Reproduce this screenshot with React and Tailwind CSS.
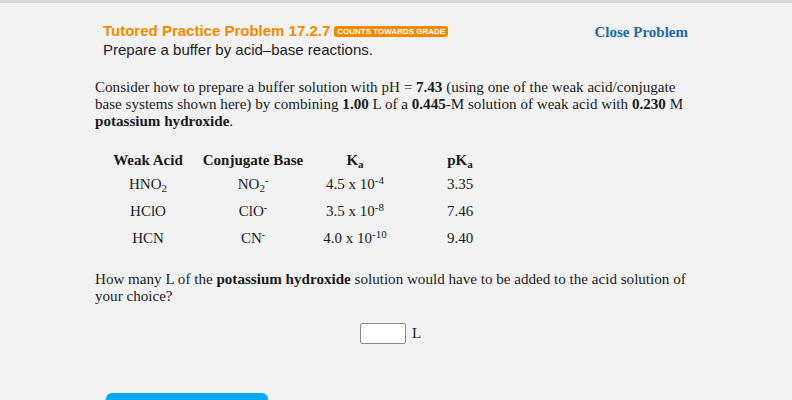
import React from 'react';

const serif = { fontFamily: '"Liberation Serif", "Times New Roman", serif' };

const rows = [
  { acid: <>HNO<sub className="text-[11px]">2</sub></>, base: <>NO<sub className="text-[11px]">2</sub><sup className="text-[10px]">-</sup></>, ka: <>4.5 x 10<sup className="text-[11px]">-4</sup></>, pka: '3.35' },
  { acid: 'HClO', base: <>ClO<sup className="text-[10px]">-</sup></>, ka: <>3.5 x 10<sup className="text-[11px]">-8</sup></>, pka: '7.46' },
  { acid: 'HCN', base: <>CN<sup className="text-[10px]">-</sup></>, ka: <>4.0 x 10<sup className="text-[11px]">-10</sup></>, pka: '9.40' },
];

export default function App() {
  return (
    <div className="w-[792px] h-[400px] overflow-hidden bg-[#f2f2f2] border-t-[3px] border-[#d6d6d6] text-[#1a1a1a]">
      <div className="flex justify-between pl-[103px] pr-[104px] pt-[19px]">
        <div style={{ fontFamily: '"Liberation Sans", Arial, sans-serif' }}>
          <div className="flex items-center gap-[4px]">
            <span className="text-[#f28a00] font-bold text-[15px] leading-[18px]">Tutored Practice Problem 17.2.7</span>
            <span className="bg-[#f28a00] text-white font-bold text-[8px] leading-[11px] px-[3px] rounded-[3px] mt-[1px]">COUNTS TOWARDS GRADE</span>
          </div>
          <div className="text-[15px] leading-[18px] mt-[1px] text-[#222]">Prepare a buffer by acid–base reactions.</div>
        </div>
        <div style={serif} className="text-[#1d6aa5] font-bold text-[15px] leading-[18px] pt-[1px]">Close Problem</div>
      </div>

      <div style={serif} className="pl-[95px] pr-[100px] text-[15.1px]">
        <p className="leading-[17px] mt-[20px] w-[600px]">
          Consider how to prepare a buffer solution with pH = <b>7.43</b> (using one of the weak acid/conjugate base systems shown here) by combining <b>1.00</b> L of a <b>0.445</b>-M solution of weak acid with <b>0.230</b> M <b>potassium hydroxide</b>.
        </p>

        <div className="ml-[13px] mt-[19px] text-[15px]">
          <div className="grid grid-cols-[80px_130px_74px_136px] font-bold text-center h-[22px] items-center">
            <div>Weak Acid</div>
            <div>Conjugate Base</div>
            <div>K<sub className="text-[11px]">a</sub></div>
            <div>pK<sub className="text-[11px]">a</sub></div>
          </div>
          {rows.map((r, i) => (
            <div key={i} className="grid grid-cols-[80px_130px_74px_136px] text-center h-[27px] items-center leading-none">
              <div>{r.acid}</div>
              <div>{r.base}</div>
              <div>{r.ka}</div>
              <div>{r.pka}</div>
            </div>
          ))}
        </div>

        <p className="leading-[17px] mt-[19px] w-[600px]">
          How many L of the <b>potassium hydroxide</b> solution would have to be added to the acid solution of your choice?
        </p>

        <div className="flex items-center mt-[17px] ml-[265px] gap-[6px]">
          <input className="w-[46px] h-[21px] bg-white border border-[#8a8a8a] rounded-[2px]" />
          <span>L</span>
        </div>

        <div className="ml-[11px] mt-[48px] w-[162px] h-[20px] bg-[#03a9f4] rounded-t-[6px]" />
      </div>
    </div>
  );
}
